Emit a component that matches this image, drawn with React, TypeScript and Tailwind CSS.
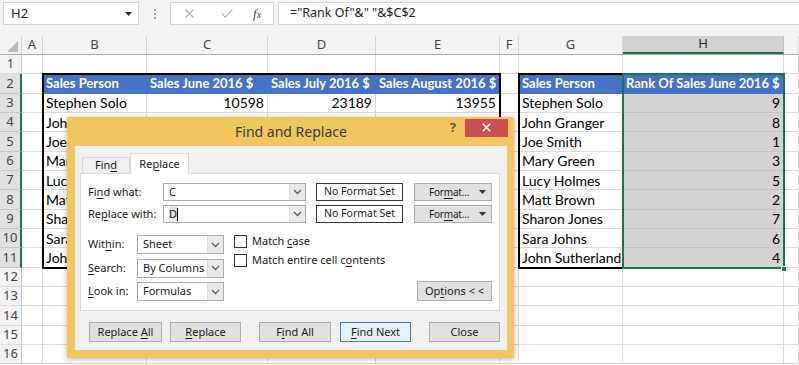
import React from 'react';

type Col = { id: string; label: string; w: string };

const cols: Col[] = [
  { id: 'A', label: 'A', w: 'w-[21px]' },
  { id: 'B', label: 'B', w: 'w-[104px]' },
  { id: 'C', label: 'C', w: 'w-[121px]' },
  { id: 'D', label: 'D', w: 'w-[108px]' },
  { id: 'E', label: 'E', w: 'w-[124px]' },
  { id: 'F', label: 'F', w: 'w-[19px]' },
  { id: 'G', label: 'G', w: 'w-[104px]' },
  { id: 'H', label: 'H', w: 'w-[161px]' },
  { id: 'I', label: '', w: 'w-[15px]' },
];

const people = [
  'Stephen Solo',
  'John Granger',
  'Joe Smith',
  'Mary Green',
  'Lucy Holmes',
  'Matt Brown',
  'Sharon Jones',
  'Sara Johns',
  'John Sutherland',
];
const june = [10598, 12870, 38722, 30415, 22960, 34108, 15302, 19877, 27531];
const july = [23189, 17420, 29115, 26780, 20310, 31044, 14975, 22610, 25408];
const aug = [13955, 19302, 33870, 28115, 24790, 29960, 17245, 21038, 26612];
const rank = [9, 8, 1, 3, 5, 2, 7, 6, 4];

const headers: Record<string, string> = {
  B: 'Sales Person',
  C: 'Sales June 2016 $',
  D: 'Sales July 2016 $',
  E: 'Sales August 2016 $',
  G: 'Sales Person',
  H: 'Rank Of Sales June 2016 $',
};

// rows 4-11 of C:E sit completely under the dialog, so only row 3 is shown
function cellValue(row: number, col: string): { text: string; num: boolean } {
  if (row < 3 || row > 11) return { text: '', num: false };
  const i = row - 3;
  if (col === 'B' || col === 'G') return { text: people[i], num: false };
  if (row === 3 && col === 'C') return { text: String(june[i]), num: true };
  if (row === 3 && col === 'D') return { text: String(july[i]), num: true };
  if (row === 3 && col === 'E') return { text: String(aug[i]), num: true };
  if (col === 'H') return { text: String(rank[i]), num: true };
  return { text: '', num: false };
}

const U = ({ c }: { c: string }) => <span className="underline underline-offset-[2px]">{c}</span>;

const Chevron = () => (
  <svg width="9" height="6" viewBox="0 0 9 6">
    <path d="M1 1l3.5 3.5L8 1" fill="none" stroke="#5a5a5a" strokeWidth="1.3" />
  </svg>
);

const DropTri = () => (
  <svg width="7" height="4" viewBox="0 0 7 4">
    <path d="M0 0h7L3.5 4z" fill="#333" />
  </svg>
);

function Toolbar() {
  return (
    <div className="h-[36px] bg-[#f3f3f3] flex items-start pt-[2px] pl-[3px] font-['Noto_Sans',sans-serif] text-[13px] text-[#222]">
      <div className="w-[136px] h-[23px] bg-white border border-[#d4d4d4] flex items-center pl-[7px] pr-[6px]">
        <span>H2</span>
        <span className="ml-auto">
          <DropTri />
        </span>
      </div>
      <div className="w-[31px] h-[23px] flex flex-col items-center justify-center gap-[2px]">
        <span className="w-[2px] h-[2px] bg-[#a0a0a0]" />
        <span className="w-[2px] h-[2px] bg-[#a0a0a0]" />
        <span className="w-[2px] h-[2px] bg-[#a0a0a0]" />
      </div>
      <div className="w-[104px] h-[23px] bg-white border border-[#d4d4d4] flex items-center pl-[14px]">
        <svg width="9" height="9" viewBox="0 0 9 9">
          <path d="M0.5 0.5l8 8M8.5 0.5l-8 8" stroke="#b0b0b0" strokeWidth="1.2" />
        </svg>
        <svg className="ml-[27px]" width="12" height="9" viewBox="0 0 12 9">
          <path d="M0.7 4.5l3.5 3.6L11.3 0.6" fill="none" stroke="#b0b0b0" strokeWidth="1.2" />
        </svg>
        <span className="ml-[20px] font-['Liberation_Serif',serif] italic text-[13px] text-[#444]">
          f<span className="text-[10px]">x</span>
        </span>
      </div>
      <div className="ml-[4px] flex-1 h-[23px] bg-white border border-r-0 border-[#d4d4d4] flex items-center pl-[11px] text-[12.5px]">
        ="Rank Of"&amp;" "&amp;$C$2
      </div>
    </div>
  );
}

function Grid() {
  const rows = Array.from({ length: 16 }, (_, i) => i + 1);
  return (
    <div className="relative text-[14px] text-black">
      <div className="flex h-[19px] bg-[#f3f3f3] border-b border-[#ababab] text-[13px] text-[#444] font-['Noto_Sans',sans-serif]">
        <div className="w-[22px] shrink-0 border-r border-[#d0d0d0] flex items-end justify-end pr-[3px] pb-[2px]">
          <svg width="11" height="11" viewBox="0 0 11 11">
            <path d="M11 0v11H0z" fill="#b9b9b9" />
          </svg>
        </div>
        {cols.map((c) =>
          c.id === 'H' ? (
            <div
              key={c.id}
              className={`${c.w} shrink-0 border-r border-[#c0c0c0] bg-[#d2d2d2] border-b-2 border-b-[#217346] flex items-center justify-center text-[#2c2c2c]`}
            >
              {c.label}
            </div>
          ) : (
            <div key={c.id} className={`${c.w} shrink-0 border-r border-[#d5d5d5] flex items-center justify-center`}>
              {c.label}
            </div>
          )
        )}
      </div>
      {rows.map((r) => {
        const sel = r >= 2 && r <= 11;
        return (
          <div key={r} className="flex h-[19.33px]">
            <div
              className={
                sel
                  ? 'w-[22px] shrink-0 bg-[#e1e1e1] border-r-2 border-r-[#217346] border-b border-b-[#c6c6c6] flex items-center justify-center text-[13px] text-[#444] font-["Noto_Sans",sans-serif]'
                  : 'w-[22px] shrink-0 bg-[#f3f3f3] border-r border-r-[#c6c6c6] border-b border-b-[#d9d9d9] flex items-center justify-center text-[13px] text-[#444] font-["Noto_Sans",sans-serif]'
              }
            >
              {r}
            </div>
            {cols.map((c) => {
              const head = r === 2 ? headers[c.id] : undefined;
              if (head) {
                return (
                  <div
                    key={c.id}
                    className={`${c.w} shrink-0 bg-[#4472c4] text-white text-[13px] font-bold border-b border-[#4472c4] flex items-center px-[3px] whitespace-nowrap overflow-hidden`}
                  >
                    {head}
                  </div>
                );
              }
              const v = cellValue(r, c.id);
              const shaded = c.id === 'H' && r >= 3 && r <= 11;
              return (
                <div
                  key={c.id}
                  className={`${c.w} shrink-0 border-r border-b ${
                    shaded ? 'bg-[#d3d3d3] border-[#c2c2c2]' : 'border-[#dadada]'
                  } flex items-center px-[3px] whitespace-nowrap overflow-hidden ${v.num ? 'justify-end' : ''}`}
                >
                  {v.text}
                </div>
              );
            })}
          </div>
        );
      })}
      {/* table outlines and selection */}
      <div className="absolute left-[42px] top-[37.33px] w-[459px] h-[195.3px] border-2 border-black pointer-events-none" />
      <div className="absolute left-[518px] top-[37.33px] w-[106px] h-[195.3px] border-2 border-r-0 border-black pointer-events-none" />
      <div className="absolute left-[622px] top-[37.33px] w-[163px] h-[195.3px] border-2 border-[#217346] pointer-events-none" />
      <div className="absolute left-[781px] top-[229.5px] w-[6px] h-[6px] bg-[#217346] border border-white" />
    </div>
  );
}

function Combo({ w, children }: { w: string; children: React.ReactNode }) {
  return (
    <div className={`${w} h-full flex border border-[#acacac] bg-white`}>
      <div className="flex-1 flex items-center pl-[5px] overflow-hidden whitespace-nowrap">{children}</div>
      <div className="w-[16px] flex items-center justify-center border-l border-[#dcdcdc] bg-[#e9e9e9]">
        <Chevron />
      </div>
    </div>
  );
}

function Btn({ w, children, primary }: { w: string; children: React.ReactNode; primary?: boolean }) {
  return (
    <div
      className={`${w} h-[20px] flex items-center justify-center border ${
        primary ? 'border-[#3c7fb1] bg-[#e5f1fb]' : 'border-[#adadad] bg-[#e1e1e1]'
      }`}
    >
      {children}
    </div>
  );
}

function FormatBtn() {
  return (
    <div className="w-[78px] h-full flex items-center border border-[#adadad] bg-[#e1e1e1] pl-[14px] pr-[5px]">
      <span className="text-[10px] tracking-[-0.2px]">
        For<U c="m" />
        at...
      </span>
      <span className="ml-auto">
        <DropTri />
      </span>
    </div>
  );
}

function Dialog() {
  return (
    <div className="absolute left-[67px] top-[117px] w-[447px] h-[241px] bg-[#f1c65f] pl-[8px] pr-[7px] pb-[8px] flex flex-col shadow-[0_1px_6px_rgba(0,0,0,0.3)] font-['Noto_Sans',sans-serif] text-[11px] text-[#1a1a1a]">
      <div className="h-[29px] relative flex items-center justify-center text-[14px] text-[#3a3a3a]">
        Find and Replace
        <div className="absolute right-[-1px] top-[1px] flex items-center">
          <span className="text-[13px] font-bold text-[#555] mr-[9px]">?</span>
          <div className="w-[43px] h-[18px] bg-[#c75050] flex items-center justify-center">
            <svg width="9" height="9" viewBox="0 0 9 9">
              <path d="M0.8 0.8l7.4 7.4M8.2 0.8l-7.4 7.4" stroke="white" strokeWidth="1.6" />
            </svg>
          </div>
        </div>
      </div>
      <div className="flex-1 bg-[#f0f0f0] flex flex-col">
        <div className="flex items-end h-[27px] pl-[7px]">
          <div className="w-[48px] h-[16px] border border-b-0 border-[#d9d9d9] bg-[#f0f0f0] flex items-center justify-center">
            <span>
              Fin<U c="d" />
            </span>
          </div>
          <div className="w-[59px] h-[21px] border border-b-0 border-[#d9d9d9] bg-white -mb-px relative z-10 flex items-center justify-center">
            <span>
              Re<U c="p" />
              lace
            </span>
          </div>
        </div>
        <div className="ml-[5px] w-[420px] h-[138px] bg-white border border-[#d9d9d9] pt-[9px] pl-[7px] pr-[7px] flex flex-col">
          <div className="flex items-center h-[18px]">
            <span className="w-[75px]">
              Fi<U c="n" />d what:
            </span>
            <Combo w="w-[143px]">C</Combo>
            <div className="ml-[10px] w-[87px] h-full border border-[#333] flex items-center justify-center text-[10.5px]">
              No Format Set
            </div>
            <div className="ml-[11px] h-full">
              <FormatBtn />
            </div>
          </div>
          <div className="flex items-center h-[18px] mt-[4px]">
            <span className="w-[75px]">
              Re<U c="p" />
              lace with:
            </span>
            <Combo w="w-[143px]">
              <span className="bg-[#e4e4e4]">D</span>
              <span className="w-px h-[13px] bg-black" />
            </Combo>
            <div className="ml-[10px] w-[87px] h-full border border-[#333] flex items-center justify-center text-[10.5px]">
              No Format Set
            </div>
            <div className="ml-[11px] h-full">
              <FormatBtn />
            </div>
          </div>
          <div className="flex mt-[12px]">
            <div className="flex flex-col gap-[4.5px]">
              <div className="flex items-center h-[19px]">
                <span className="w-[49px]">
                  Wit<U c="h" />
                  in:
                </span>
                <Combo w="w-[87px]">Sheet</Combo>
              </div>
              <div className="flex items-center h-[19px]">
                <span className="w-[49px]">
                  <U c="S" />
                  earch:
                </span>
                <Combo w="w-[87px]">By Columns</Combo>
              </div>
              <div className="flex items-center h-[19px]">
                <span className="w-[49px]">
                  <U c="L" />
                  ook in:
                </span>
                <Combo w="w-[87px]">Formulas</Combo>
              </div>
            </div>
            <div className="ml-[10px] flex flex-col gap-[6px]">
              <div className="flex items-center h-[13px]">
                <span className="w-[13px] h-[13px] border border-[#333] bg-white" />
                <span className="ml-[5px]">
                  Match <U c="c" />
                  ase
                </span>
              </div>
              <div className="flex items-center h-[13px]">
                <span className="w-[13px] h-[13px] border border-[#333] bg-white" />
                <span className="ml-[5px]">
                  Match entire cell c<U c="o" />
                  ntents
                </span>
              </div>
            </div>
            <div className="ml-auto self-end">
              <Btn w="w-[75px]">
                <span>
                  Op<U c="t" />
                  ions &lt; &lt;
                </span>
              </Btn>
            </div>
          </div>
        </div>
        <div className="flex mt-[11px] pl-[14px]">
          <Btn w="w-[73px]">
            <span>
              Replace <U c="A" />
              ll
            </span>
          </Btn>
          <div className="ml-[8px]">
            <Btn w="w-[71px]">
              <span>
                <U c="R" />
                eplace
              </span>
            </Btn>
          </div>
          <div className="ml-[18px]">
            <Btn w="w-[72px]">
              <span>
                F<U c="i" />
                nd All
              </span>
            </Btn>
          </div>
          <div className="ml-[9px]">
            <Btn w="w-[71px]" primary>
              <span>
                <U c="F" />
                ind Next
              </span>
            </Btn>
          </div>
          <div className="ml-[18px]">
            <Btn w="w-[71px]">Close</Btn>
          </div>
        </div>
      </div>
    </div>
  );
}

export default function App() {
  return (
    <div className="relative w-[799px] h-[365px] overflow-hidden bg-white font-['Lato',sans-serif]">
      <Toolbar />
      <Grid />
      <Dialog />
    </div>
  );
}
